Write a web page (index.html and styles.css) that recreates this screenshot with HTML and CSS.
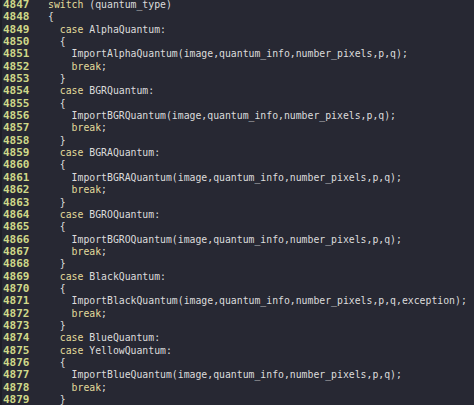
FILE: index.html
```html
<!DOCTYPE html>
<html>
<head>
<meta charset="utf-8">
<link rel="stylesheet" href="styles.css">
</head>
<body>
<div class="editor">
  <div class="gutter">
    <div>4847</div><div>4848</div><div>4849</div><div>4850</div><div>4851</div><div>4852</div><div>4853</div><div>4854</div><div>4855</div><div>4856</div><div>4857</div><div>4858</div><div>4859</div><div>4860</div><div>4861</div><div>4862</div><div>4863</div><div>4864</div><div>4865</div><div>4866</div><div>4867</div><div>4868</div><div>4869</div><div>4870</div><div>4871</div><div>4872</div><div>4873</div><div>4874</div><div>4875</div><div>4876</div><div>4877</div><div>4878</div><div>4879</div>
  </div>
<pre class="code"><span class="k">switch</span> (quantum_type)
{
  <span class="k">case</span> AlphaQuantum:
  {
    ImportAlphaQuantum(image,quantum_info,number_pixels,p,q);
    <span class="k">break</span>;
  }
  <span class="k">case</span> BGRQuantum:
  {
    ImportBGRQuantum(image,quantum_info,number_pixels,p,q);
    <span class="k">break</span>;
  }
  <span class="k">case</span> BGRAQuantum:
  {
    ImportBGRAQuantum(image,quantum_info,number_pixels,p,q);
    <span class="k">break</span>;
  }
  <span class="k">case</span> BGROQuantum:
  {
    ImportBGROQuantum(image,quantum_info,number_pixels,p,q);
    <span class="k">break</span>;
  }
  <span class="k">case</span> BlackQuantum:
  {
    ImportBlackQuantum(image,quantum_info,number_pixels,p,q,exception);
    <span class="k">break</span>;
  }
  <span class="k">case</span> BlueQuantum:
  <span class="k">case</span> YellowQuantum:
  {
    ImportBlueQuantum(image,quantum_info,number_pixels,p,q);
    <span class="k">break</span>;
  }</pre>
</div>
</body>
</html>
```
FILE: styles.css
```css
html, body {
  margin: 0;
  padding: 0;
  background: #272833;
  overflow: hidden;
}
.editor {
  display: flex;
  margin-top: -1px;
  border-left: 2px solid #1e1f27;
  height: 420px;
  font-family: "DejaVu Sans Mono", monospace;
}
.gutter {
  width: 45px;
  padding-left: 1px;
  color: #cfd889;
  font-weight: bold;
  font-size: 11px;
  line-height: 12.35px;
}
.code {
  margin: 0;
  font-family: "DejaVu Sans Mono", monospace;
  font-size: 9.8px;
  line-height: 12.35px;
  color: #dcdcdc;
  white-space: pre;
}
.k {
  color: #e3dc9c;
}
```
